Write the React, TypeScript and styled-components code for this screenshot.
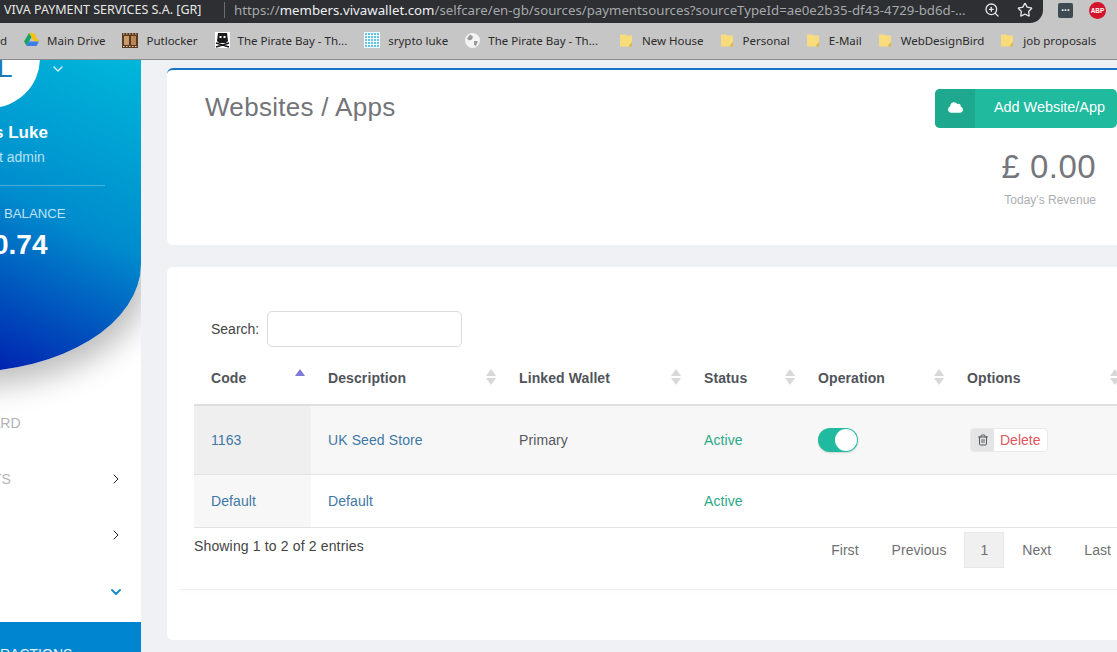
import React from "react";
import styled, { createGlobalStyle } from "styled-components";
import { ChevronDown, ChevronRight, Star, Trash2, ZoomIn } from "lucide-react";
import { FaCloud } from "react-icons/fa";

const GlobalStyle = createGlobalStyle`
  html, body {
    margin: 0;
    padding: 0;
    background: #f0f1f5;
  }
  * { box-sizing: border-box; }
`;

const Screen = styled.div`
  width: 1117px;
  height: 652px;
  overflow: hidden;
  display: flex;
  flex-direction: column;
  font-family: "Liberation Sans", Arial, sans-serif;
`;

/* browser chrome */
const TitleRow = styled.div`
  height: 23px;
  flex: none;
  display: flex;
  align-items: center;
  background: #c6c6c6;
`;

const AddressBar = styled.div`
  width: 1043px;
  height: 23px;
  flex: none;
  display: flex;
  align-items: center;
  padding: 0 10px 4px 4px;
  background: #2d2f32;
  border-radius: 0 0 13px 0;
  font-family: "Noto Sans", sans-serif;
  white-space: nowrap;
`;

const SiteName = styled.span`
  font-size: 12.5px;
  color: #e8e8e8;
  width: 220px;
`;

const Separator = styled.span`
  width: 1px;
  height: 16px;
  background: #6b6d70;
  margin-right: 9px;
`;

const Url = styled.span`
  font-size: 13.25px;
  color: #a6a9ac;
  width: 732px;
  overflow: hidden;
  b {
    font-weight: 400;
    color: #eef0f2;
  }
`;

const BarIcons = styled.span`
  display: flex;
  align-items: center;
  gap: 17px;
  margin-left: 18px;
  color: #e4e4e4;
`;

const Extensions = styled.div`
  display: flex;
  align-items: center;
  gap: 16px;
  margin-left: 15px;
  padding-bottom: 3px;
`;

const ExtensionBox = styled.span`
  width: 15px;
  height: 15px;
  background: #3e4a52;
  border-radius: 2px;
  color: #fff;
  font-size: 10px;
  line-height: 9px;
  text-align: center;
  font-weight: 700;
`;

const AbpBadge = styled.span`
  width: 17px;
  height: 17px;
  border-radius: 50%;
  background: #d3142a;
  color: #fff;
  font-size: 6.5px;
  font-weight: 700;
  line-height: 17px;
  text-align: center;
`;

const BookmarkBar = styled.div`
  height: 37px;
  flex: none;
  display: flex;
  align-items: center;
  gap: 17px;
  padding-bottom: 2px;
  background: #c6c6c6;
  border-bottom: 1px solid #8c8c8c;
  font-family: "Noto Sans", sans-serif;
  font-size: 11.5px;
  color: #2b2b2b;
  white-space: nowrap;
`;

const Bookmark = styled.span`
  display: flex;
  align-items: center;
  gap: 8px;
`;

const FolderGroup = styled.span`
  display: flex;
  align-items: center;
  gap: 17px;
  margin-left: 5px;
`;

const FolderMark = styled.span`
  display: flex;
  align-items: center;
  gap: 10px;
`;

const Folder = () => (
  <svg width="12" height="15" viewBox="0 0 13 15">
    <path d="M0 1h6l1 1h6v12H0z" fill="#f8dc7c" />
    <path d="M9 14l4-5v5z" fill="#d9b44a" />
  </svg>
);

const DriveIcon = () => (
  <svg width="15" height="14" viewBox="0 0 15 14">
    <path d="M5 0h5l5 8.5h-5z" fill="#f4c20d" />
    <path d="M5 0l2.5 4.3L2.6 13 0 8.5z" fill="#1aa260" />
    <path d="M4.8 8.5H15L12.4 13H2.6z" fill="#3b7de9" />
  </svg>
);

const FilmIcon = () => (
  <svg width="16" height="15" viewBox="0 0 16 15">
    <rect width="16" height="15" fill="#5c3a22" />
    <rect x="2" y="3" width="5" height="9" fill="#c99b6a" />
    <rect x="9" y="3" width="5" height="9" fill="#b98655" />
    <path d="M1 1h14M1 13.5h14" stroke="#e5cfa9" strokeDasharray="1.5 1.5" />
  </svg>
);

const PirateIcon = () => (
  <svg width="15" height="16" viewBox="0 0 15 16">
    <rect width="15" height="16" fill="#fff" />
    <path d="M3 1h9l1 8-2 2H4L2 9z" fill="#1b1b1b" />
    <rect x="4.5" y="4" width="2" height="2" fill="#fff" />
    <rect x="8.5" y="4" width="2" height="2" fill="#fff" />
    <path d="M1 11l13 4M14 11L1 15" stroke="#1b1b1b" strokeWidth="1.5" />
  </svg>
);

const GridIcon = () => (
  <svg width="16" height="16" viewBox="0 0 16 16">
    <rect width="16" height="16" fill="#f2fbfd" />
    {Array.from({ length: 25 }).map((_, i) => (
      <rect key={i} x={(i % 5) * 3 + 1} y={Math.floor(i / 5) * 3 + 1} width="2" height="2" fill="#63c4e0" />
    ))}
  </svg>
);

const GlobeIcon = () => (
  <svg width="15" height="15" viewBox="0 0 15 15">
    <circle cx="7.5" cy="7.5" r="7.5" fill="#f4f4f4" />
    <path d="M5 1.5l3 2-1 3-3 1-2-2zM9 8l4 0-2 5-2-1z" fill="#9a9a9a" />
  </svg>
);

/* page */
const Page = styled.div`
  flex: 1;
  min-height: 0;
  display: flex;
`;

const Sidebar = styled.aside`
  width: 141px;
  flex: none;
  overflow: hidden;
  display: flex;
  flex-direction: column;
  background: #fff;
`;

const ProfilePanel = styled.div`
  height: 312px;
  flex: none;
  margin-left: -60px;
  width: 201px;
  padding-left: 60px;
  color: #fff;
  background: linear-gradient(205deg, #00b7da 0%, #008ccd 48%, #0012ab 100%);
  border-bottom-right-radius: 175px 108px;
  box-shadow: 8px 14px 30px rgba(0, 0, 0, 0.26);
`;

const ProfileTop = styled.div`
  display: flex;
  gap: 12px;
  margin-left: -60px;
  height: 48px;
  overflow: visible;
`;

const Avatar = styled.div`
  width: 100px;
  height: 100px;
  flex: none;
  margin-top: -52px;
  border-radius: 50%;
  background: #fff;
  color: #1a78bd;
  font-size: 28px;
  padding: 46px 0 0 57px;
  line-height: 1;
`;

const CaretButton = styled.span`
  height: 16px;
  margin: 1px 0 0 -2px;
  color: #d8f3fb;
`;

const UserName = styled.div`
  margin: 15px 0 0 -6px;
  font-size: 17px;
  font-weight: 700;
  line-height: 20px;
  white-space: nowrap;
`;

const UserRole = styled.div`
  margin: 6px 0 0 -1px;
  font-size: 14px;
  line-height: 16px;
  color: #b5e2f3;
  white-space: nowrap;
`;

const Rule = styled.div`
  width: 105px;
  height: 1px;
  margin-top: 20px;
  background: rgba(255, 255, 255, 0.28);
`;

const BalanceLabel = styled.div`
  margin: 20px 0 0 4px;
  font-size: 13.2px;
  line-height: 16px;
  color: #bfe2f5;
  white-space: nowrap;
`;

const BalanceValue = styled.div`
  margin: 7px 0 0 -7px;
  font-size: 28px;
  font-weight: 700;
  line-height: 32px;
  white-space: nowrap;
`;

const NavList = styled.nav`
  flex: 1;
  display: flex;
  flex-direction: column;
  padding-top: 23px;
`;

const NavItem = styled.div<{ $height: number }>`
  height: ${(p) => p.$height}px;
  flex: none;
  display: flex;
  align-items: center;
  justify-content: space-between;
  padding-right: 17px;
  font-size: 14px;
  color: #b1b3b7;
`;

const NavLabel = styled.span<{ $shift: number }>`
  margin-left: -${(p) => p.$shift}px;
`;

const NavChevron = styled.span<{ $blue?: boolean }>`
  display: flex;
  margin-left: auto;
  color: ${(p) => (p.$blue ? "#1b8ec9" : "#222")};
`;

const SideFooter = styled.div`
  height: 30px;
  flex: none;
  margin-top: auto;
  background: #0086d1;
  color: #e4f4fc;
  font-size: 14px;
  padding-top: 24px;
  white-space: nowrap;
  line-height: 16px;
`;

const Main = styled.main`
  flex: 1;
  min-width: 0;
  overflow: hidden;
  padding: 8px 0 0 26px;
`;

const HeaderCard = styled.section`
  height: 177px;
  margin-right: -10px;
  padding: 19px 31px 0 38px;
  background: #fff;
  border-top: 2px solid #1574c4;
  border-radius: 6px;
  display: flex;
  justify-content: space-between;
`;

const PageTitle = styled.h1`
  margin: 3px 0 0;
  font-size: 26px;
  font-weight: 400;
  letter-spacing: 0.3px;
  line-height: 30px;
  color: #727479;
`;

const RevenueColumn = styled.div`
  display: flex;
  flex-direction: column;
  align-items: flex-end;
`;

const AddButton = styled.button`
  width: 182px;
  height: 39px;
  margin-right: -21px;
  padding: 0;
  display: flex;
  align-items: center;
  border: none;
  border-radius: 5px;
  overflow: hidden;
  background: #20bb9f;
  color: #fff;
  font: 400 14.4px "Liberation Sans", Arial, sans-serif;
`;

const AddIcon = styled.span`
  width: 40px;
  height: 39px;
  flex: none;
  margin-right: 19px;
  padding-bottom: 3px;
  display: flex;
  align-items: center;
  justify-content: center;
  background: #1ea98f;
`;

const AddLabel = styled.span`
  margin-top: -4px;
`;

const Amount = styled.div`
  margin-top: 20px;
  font-size: 33px;
  line-height: 38px;
  color: #75777c;
  letter-spacing: 0.45px;
`;

const AmountCaption = styled.div`
  margin-top: 7px;
  font-size: 12px;
  line-height: 14px;
  color: #acaeb2;
`;

const ListCard = styled.section`
  height: 373px;
  margin: 22px -10px 0 0;
  padding-left: 12px;
  background: #fff;
  border-radius: 6px;
  overflow: hidden;
`;

const TablePanel = styled.div`
  height: 323px;
  padding: 44px 0 0 15px;
  border-bottom: 1px solid #f0f0f2;
  box-shadow: 0 2px 4px rgba(0, 0, 0, 0.02);
`;

const TableWrap = styled.div`
  width: 932px;
`;

const SearchRow = styled.label`
  display: flex;
  align-items: center;
  gap: 8px;
  padding-left: 17px;
  font-size: 14px;
  color: #444;
`;

const SearchInput = styled.input`
  width: 195px;
  height: 36px;
  background: #fff;
  border: 1px solid #dcdcdf;
  border-radius: 5px;
`;

const DataTable = styled.table`
  width: 932px;
  margin-top: 4px;
  table-layout: fixed;
  border-collapse: collapse;
  font-size: 14px;
  letter-spacing: 0.1px;
`;

const HeadCell = styled.th<{ $width: number }>`
  position: relative;
  width: ${(p) => p.$width}px;
  height: 54px;
  padding: 0 0 0 17px;
  text-align: left;
  font-size: 14px;
  font-weight: 700;
  letter-spacing: 0.1px;
  color: #50545a;
  border-bottom: 2px solid #dfdfdf;
`;

const SortArrows = styled.span<{ $asc?: boolean }>`
  position: absolute;
  right: 6px;
  top: 18px;
  display: flex;
  flex-direction: column;
  gap: 2px;
  &::before,
  &::after {
    content: "";
    width: 0;
    height: 0;
    border-left: 5px solid transparent;
    border-right: 5px solid transparent;
  }
  &::before {
    border-bottom: 7px solid ${(p) => (p.$asc ? "#7d7bd6" : "#d8d8da")};
  }
  &::after {
    border-top: 7px solid ${(p) => (p.$asc ? "transparent" : "#d8d8da")};
  }
`;

const Row = styled.tr<{ $shaded?: boolean; $height: number }>`
  height: ${(p) => p.$height}px;
  background: ${(p) => (p.$shaded ? "#f7f7f7" : "#fff")};
  border-bottom: 1px solid #e3e3e3;
`;

const Cell = styled.td<{ $sorted?: "dark" | "light" }>`
  padding: 0 0 0 17px;
  color: #55585d;
  background: ${(p) =>
    p.$sorted === "dark" ? "#efefef" : p.$sorted === "light" ? "#f7f7f7" : "transparent"};
`;

const CodeLink = styled.a`
  color: #3f78a6;
`;

const StatusText = styled.span`
  color: #2aa987;
`;

const Toggle = styled.span`
  display: block;
  width: 40px;
  height: 24px;
  padding: 1px;
  border-radius: 12px;
  background: #20bb9f;
  box-shadow: 0 1px 2px rgba(0, 0, 0, 0.15);
  &::after {
    content: "";
    display: block;
    width: 22px;
    height: 22px;
    margin-left: auto;
    border-radius: 50%;
    background: #fff;
  }
`;

const DeleteButton = styled.span`
  display: inline-flex;
  align-items: stretch;
  height: 24px;
  width: 78px;
  vertical-align: middle;
  margin-left: 3px;
  border: 1px solid #e9e9e9;
  border-radius: 4px;
  background: #fff;
  overflow: hidden;
  color: #e0565f;
  line-height: 22px;
  letter-spacing: 0;
`;

const DeleteIcon = styled.span`
  width: 23px;
  flex: none;
  margin-right: 6px;
  display: flex;
  align-items: center;
  justify-content: center;
  background: #e4e4e4;
  color: #55585d;
`;

const TableFooter = styled.div`
  display: flex;
  justify-content: space-between;
  align-items: flex-start;
  padding-top: 4px;
`;

const EntryCount = styled.div`
  margin-top: 6px;
  font-size: 14px;
  line-height: 16px;
  letter-spacing: 0.15px;
  color: #444;
`;

const Pager = styled.div`
  display: flex;
  gap: 3px;
  letter-spacing: 0.05px;
`;

const PageButton = styled.span<{ $active?: boolean }>`
  height: 36px;
  padding: 0 15px;
  font-size: 14px;
  color: #6d6f73;
  background: ${(p) => (p.$active ? "#f0f0f0" : "transparent")};
  border: ${(p) => (p.$active ? "1px solid #e8e8e8" : "none")};
  line-height: ${(p) => (p.$active ? 34 : 36)}px;
`;

const bookmarks = [
  { label: "Main Drive", icon: <DriveIcon /> },
  { label: "Putlocker", icon: <FilmIcon /> },
  { label: "The Pirate Bay - Th...", icon: <PirateIcon /> },
  { label: "srypto luke", icon: <GridIcon /> },
  { label: "The Pirate Bay - Th...", icon: <GlobeIcon /> },
];

const folders = ["New House", "Personal", "E-Mail", "WebDesignBird", "job proposals"];

const columns = [
  { label: "Code", width: 117, asc: true },
  { label: "Description", width: 191 },
  { label: "Linked Wallet", width: 185 },
  { label: "Status", width: 114 },
  { label: "Operation", width: 149 },
  { label: "Options", width: 176 },
];

const App = () => {
  return (
    <Screen>
      <GlobalStyle />
      <TitleRow>
        <AddressBar>
          <SiteName>VIVA PAYMENT SERVICES S.A. [GR]</SiteName>
          <Separator />
          <Url>
            https://<b>members.vivawallet.com</b>/selfcare/en-gb/sources/paymentsources?sourceTypeId=ae0e2b35-df43-4729-bd6d-...
          </Url>
          <BarIcons>
            <ZoomIn size={16} />
            <Star size={16} />
          </BarIcons>
        </AddressBar>
        <Extensions>
          <ExtensionBox>...</ExtensionBox>
          <AbpBadge>ABP</AbpBadge>
        </Extensions>
      </TitleRow>
      <BookmarkBar>
        <span>d</span>
        {bookmarks.map((b, i) => (
          <Bookmark key={i}>
            {b.icon}
            {b.label}
          </Bookmark>
        ))}
        <FolderGroup>
          {folders.map((f) => (
            <FolderMark key={f}>
              <Folder />
              {f}
            </FolderMark>
          ))}
        </FolderGroup>
      </BookmarkBar>
      <Page>
        <Sidebar>
          <ProfilePanel>
            <ProfileTop>
              <Avatar>L</Avatar>
              <CaretButton>
                <ChevronDown size={16} />
              </CaretButton>
            </ProfileTop>
            <UserName>s Luke</UserName>
            <UserRole>t admin</UserRole>
            <Rule />
            <BalanceLabel>BALANCE</BalanceLabel>
            <BalanceValue>0.74</BalanceValue>
          </ProfilePanel>
          <NavList>
            <NavItem $height={56}>
              <NavLabel $shift={9}>ARD</NavLabel>
            </NavItem>
            <NavItem $height={56}>
              <NavLabel $shift={7}>TS</NavLabel>
              <NavChevron>
                <ChevronRight size={16} strokeWidth={1.5} />
              </NavChevron>
            </NavItem>
            <NavItem $height={56}>
              <NavChevron>
                <ChevronRight size={16} strokeWidth={1.5} />
              </NavChevron>
            </NavItem>
            <NavItem $height={58}>
              <NavChevron $blue>
                <ChevronDown size={16} strokeWidth={3} />
              </NavChevron>
            </NavItem>
            <SideFooter>RACTIONS</SideFooter>
          </NavList>
        </Sidebar>
        <Main>
          <HeaderCard>
            <PageTitle>Websites / Apps</PageTitle>
            <RevenueColumn>
              <AddButton>
                <AddIcon>
                  <FaCloud size={15} />
                </AddIcon>
                <AddLabel>Add Website/App</AddLabel>
              </AddButton>
              <Amount>£ 0.00</Amount>
              <AmountCaption>Today's Revenue</AmountCaption>
            </RevenueColumn>
          </HeaderCard>
          <ListCard>
            <TablePanel>
              <TableWrap>
                <SearchRow>
                  Search:
                  <SearchInput />
                </SearchRow>
                <DataTable>
                  <thead>
                    <tr>
                      {columns.map((c) => (
                        <HeadCell key={c.label} $width={c.width}>
                          {c.label}
                          <SortArrows $asc={c.asc} />
                        </HeadCell>
                      ))}
                    </tr>
                  </thead>
                  <tbody>
                    <Row $shaded $height={69}>
                      <Cell $sorted="dark">
                        <CodeLink>1163</CodeLink>
                      </Cell>
                      <Cell>
                        <CodeLink>UK Seed Store</CodeLink>
                      </Cell>
                      <Cell>Primary</Cell>
                      <Cell>
                        <StatusText>Active</StatusText>
                      </Cell>
                      <Cell>
                        <Toggle />
                      </Cell>
                      <Cell>
                        <DeleteButton>
                          <DeleteIcon>
                            <Trash2 size={12} />
                          </DeleteIcon>
                          Delete
                        </DeleteButton>
                      </Cell>
                    </Row>
                    <Row $height={53}>
                      <Cell $sorted="light">
                        <CodeLink>Default</CodeLink>
                      </Cell>
                      <Cell>
                        <CodeLink>Default</CodeLink>
                      </Cell>
                      <Cell />
                      <Cell>
                        <StatusText>Active</StatusText>
                      </Cell>
                      <Cell />
                      <Cell />
                    </Row>
                  </tbody>
                </DataTable>
                <TableFooter>
                  <EntryCount>Showing 1 to 2 of 2 entries</EntryCount>
                  <Pager>
                    <PageButton>First</PageButton>
                    <PageButton>Previous</PageButton>
                    <PageButton $active>1</PageButton>
                    <PageButton>Next</PageButton>
                    <PageButton>Last</PageButton>
                  </Pager>
                </TableFooter>
              </TableWrap>
            </TablePanel>
          </ListCard>
        </Main>
      </Page>
    </Screen>
  );
};

export default App;
